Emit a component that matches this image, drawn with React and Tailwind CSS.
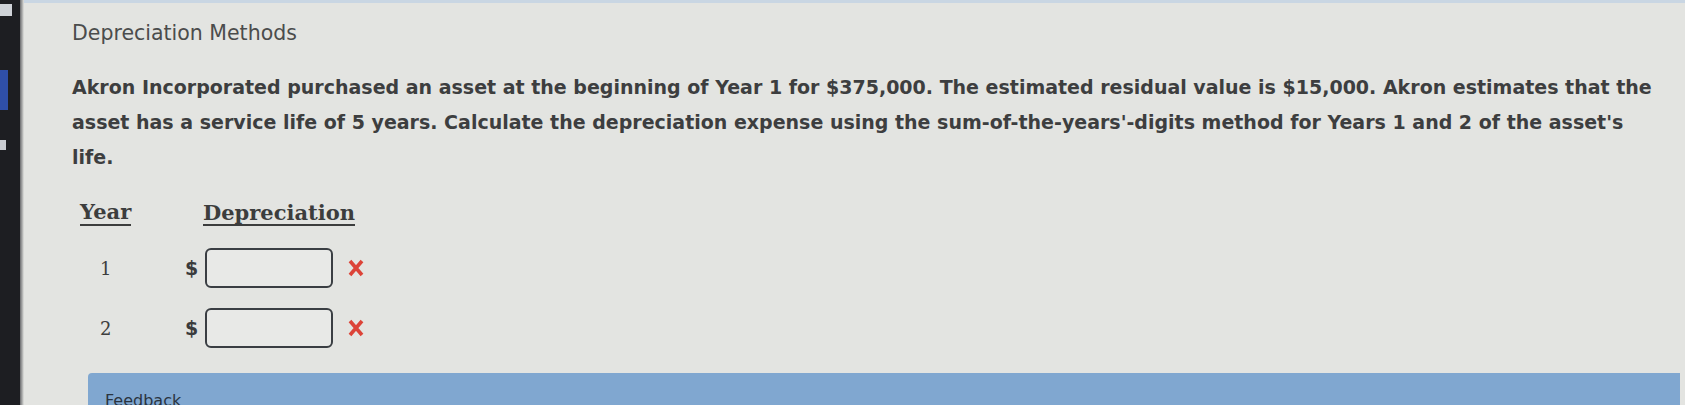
export default function App() {
    const rows = [1, 2];

    return (
        <div className="flex h-[405px] w-[1685px] overflow-hidden bg-[#e3e4e1]">
            {/* Left edge of the monitor */}
            <div className="relative flex w-[20px] flex-col bg-[#1d1e22]">
                <div className="mt-[4px] h-[12px] w-[12px] bg-[#cfd3d8]" />
                <div className="mt-[54px] h-[40px] w-[8px] bg-[#2f4fa8]" />
                <div className="mt-[30px] h-[10px] w-[6px] bg-[#c9ccd2]" />
            </div>
            <div className="w-[4px] bg-gradient-to-r from-[#6b6c6e] to-[#e3e4e1]" />

            {/* Page */}
            <div
                className="flex flex-1 flex-col border-t-[3px] border-[#c9d6e3] pl-[48px]"
                style={{ fontFamily: '"DejaVu Sans", Verdana, sans-serif' }}
            >
                <h1 className="pt-[16px] text-[20.5px] leading-[28px] text-[#4b4c4c]">
                    Depreciation Methods
                </h1>

                <p className="mt-[23px] w-[1590px] text-[19px] font-bold leading-[35px] text-[#3d3e3f]">
                    Akron Incorporated purchased an asset at the beginning of Year 1 for $375,000. The
                    estimated residual value is $15,000. Akron estimates that the asset has a service
                    life of 5 years. Calculate the depreciation expense using the sum-of-the-years'-digits
                    method for Years 1 and 2 of the asset's life.
                </p>

                {/* Table */}
                <div
                    className="mt-[26px] flex flex-col"
                    style={{ fontFamily: '"DejaVu Serif", Georgia, serif' }}
                >
                    <div className="flex items-end">
                        <div className="w-[131px] pl-[8px]">
                            <span className="border-b-2 border-[#3c3d3d] text-[21px] font-bold leading-[22px] text-[#3c3d3d]">
                                Year
                            </span>
                        </div>
                        <span className="border-b-2 border-[#3c3d3d] text-[21px] font-bold leading-[22px] text-[#3c3d3d]">
                            Depreciation
                        </span>
                    </div>

                    <div className="mt-[22px] flex flex-col gap-[20px]">
                        {rows.map((n) => (
                            <div key={n} className="flex h-[40px] items-center">
                                <div className="w-[113px] pl-[28px] text-[18px] text-[#3d3e3e]">
                                    {n}
                                </div>
                                <span
                                    className="w-[20px] text-[19px] font-bold text-[#3a3b3c]"
                                    style={{ fontFamily: '"DejaVu Sans", Verdana, sans-serif' }}
                                >
                                    $
                                </span>
                                <input
                                    type="text"
                                    className="h-[40px] w-[128px] rounded-[6px] border-2 border-[#3a3e43] bg-[#e8e9e7] outline-none"
                                />
                                <svg
                                    viewBox="0 0 16 18"
                                    className="ml-[15px] h-[18px] w-[16px]"
                                    aria-hidden="true"
                                >
                                    <path
                                        d="M2 2 L14 16 M14 2 L2 16"
                                        stroke="#dc4338"
                                        strokeWidth="3.6"
                                        strokeLinecap="butt"
                                    />
                                </svg>
                            </div>
                        ))}
                    </div>
                </div>

                {/* Feedback panel */}
                <div className="mt-[25px] ml-[16px] mr-[5px] flex-1 rounded-tl-[4px] bg-[#80a7d0] pl-[17px] pt-[16px]">
                    <span className="text-[16px] leading-[20px] text-[#2a3440]">Feedback</span>
                </div>
            </div>
        </div>
    );
}
